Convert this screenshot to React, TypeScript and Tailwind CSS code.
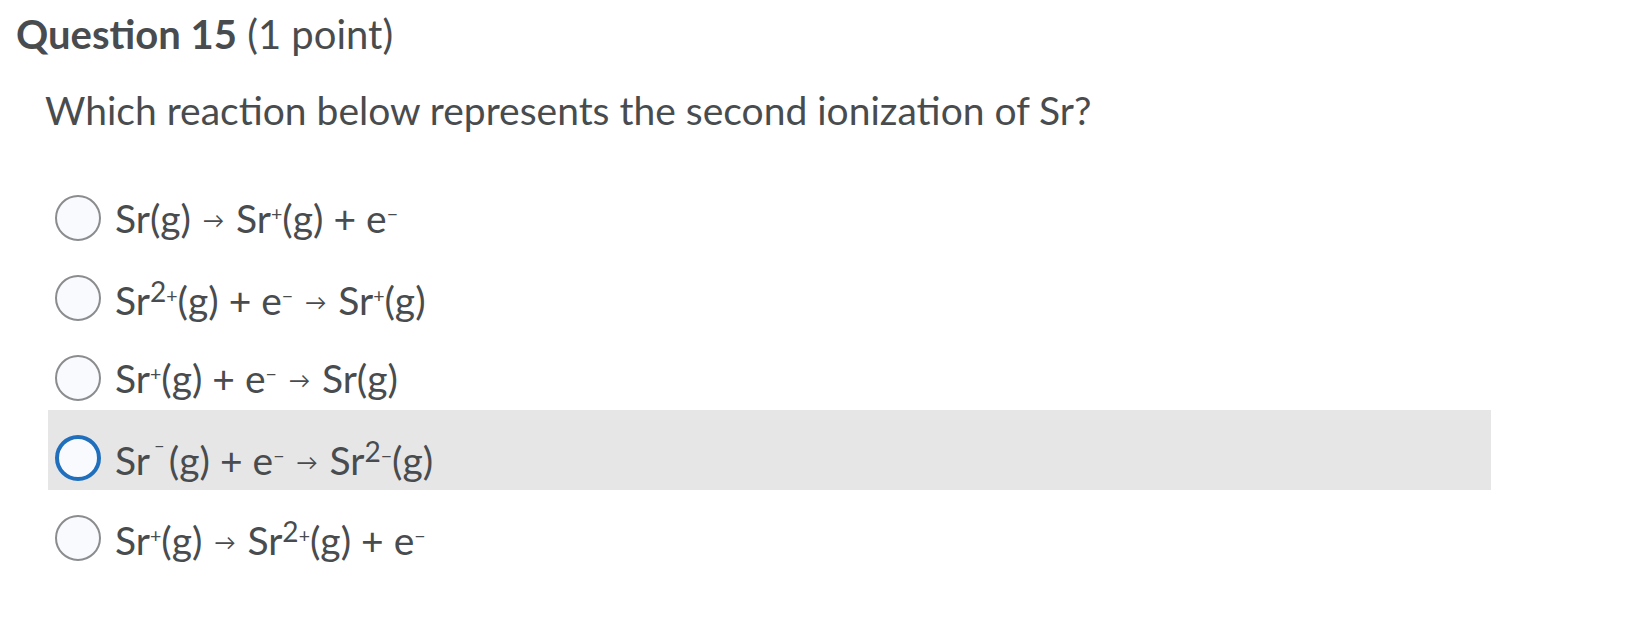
import type { ReactNode } from "react";

// Quiz question card: heading, prompt and five radio choices (4th one focused/hovered).

// small charge sign (+ / −), raised to the upper part of the letters
function Charge({ children }: { children: ReactNode }) {
  return <span className="align-[0.62em] text-[0.5em]">{children}</span>;
}

// superscript digit (the "2" of 2+)
function Num({ children }: { children: ReactNode }) {
  return <span className="align-[0.45em] text-[0.72em]">{children}</span>;
}

function Arrow() {
  return <span className="mx-[0.55em] align-[0.2em] text-[0.55em]">→</span>;
}

function Radio({ focused }: { focused?: boolean }) {
  return (
    <span
      className={
        focused
          ? "h-[46px] w-[46px] shrink-0 rounded-full border-[4px] border-[#1f6fbd] bg-[#f9fafe]"
          : "h-[46px] w-[46px] shrink-0 rounded-full border-2 border-[#8a8c8e] bg-[#f9fafe]"
      }
    />
  );
}

const CHOICES: ReactNode[] = [
  <>
    Sr(g)
    <Arrow />
    Sr<Charge>+</Charge>(g) + e<Charge>−</Charge>
  </>,
  <>
    Sr<Num>2</Num>
    <Charge>+</Charge>(g) + e<Charge>−</Charge>
    <Arrow />
    Sr<Charge>+</Charge>(g)
  </>,
  <>
    Sr<Charge>+</Charge>(g) + e<Charge>−</Charge>
    <Arrow />
    Sr(g)
  </>,
  <>
    Sr<span className="mx-[0.25em] align-[1.3em] text-[0.45em]">−</span>(g) + e<Charge>−</Charge>
    <Arrow />
    Sr<Num>2</Num>
    <Charge>−</Charge>(g)
  </>,
  <>
    Sr<Charge>+</Charge>(g)
    <Arrow />
    Sr<Num>2</Num>
    <Charge>+</Charge>(g) + e<Charge>−</Charge>
  </>,
];

export default function App() {
  return (
    <div className="min-h-[638px] w-[1648px] bg-white font-['Lato',sans-serif] text-[#494c4e]">
      <h2 className="pl-4 pt-[10px] text-[40px] leading-[48px]">
        <span className="font-bold">Question 15</span> (1 point)
      </h2>
      <p className="mt-[28px] pl-[45px] text-[39px] leading-[48px]">
        Which reaction below represents the second ionization of Sr?
      </p>
      <div className="mt-[36px] ml-[48px] w-[1443px]">
        {CHOICES.map((c, i) => (
          <div key={i} className={i === 3 ? "h-20 bg-[#e6e6e6] pl-[7px] pt-[25px]" : "h-20 pl-[7px] pt-[25px]"}>
            <div className="flex h-[46px] items-center gap-[14px]">
              <Radio focused={i === 3} />
              <span className="whitespace-nowrap text-[39px] leading-none">{c}</span>
            </div>
          </div>
        ))}
      </div>
    </div>
  );
}
